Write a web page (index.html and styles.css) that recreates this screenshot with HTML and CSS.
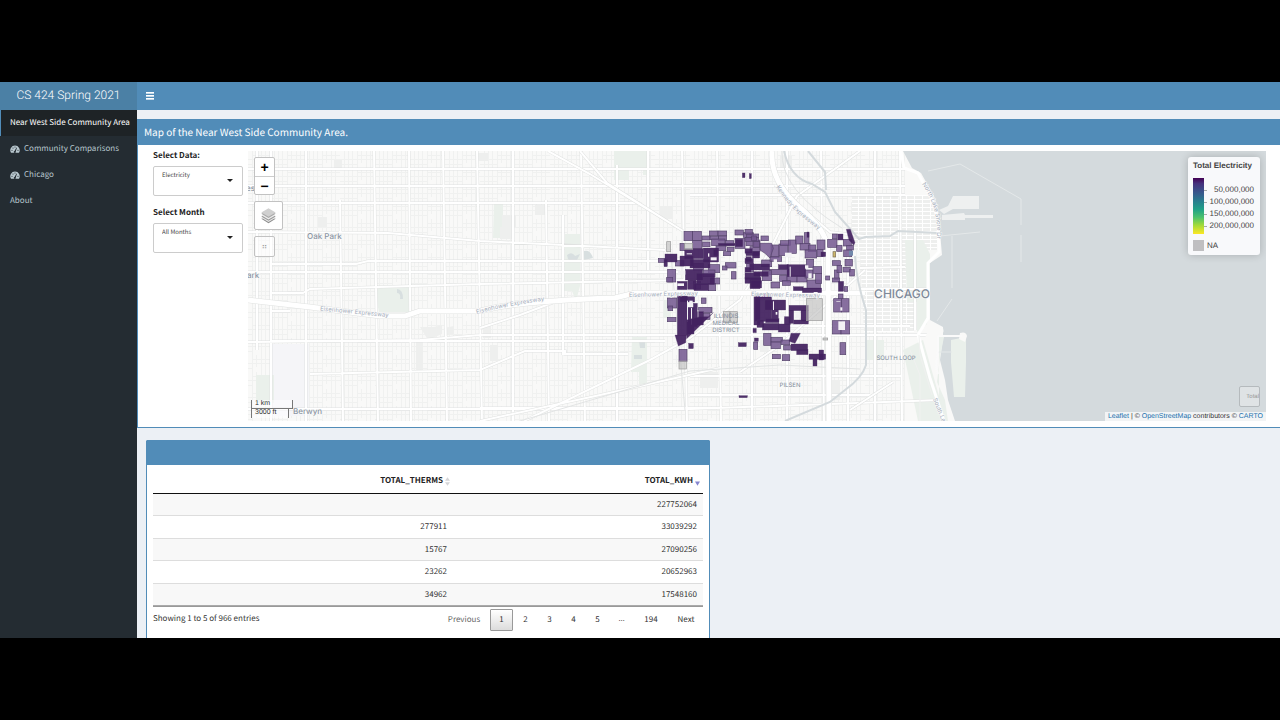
FILE: index.html
```html
<!DOCTYPE html>
<html lang="en">
<head>
<meta charset="utf-8">
<title>CS 424 Spring 2021</title>
<link rel="stylesheet" href="styles.css">
</head>
<body>
<div class="app">
  <aside class="sidebar">
    <div class="brand">CS 424 Spring 2021</div>
    <nav class="menu">
      <a class="menu-item active" href="#west">Near West Side Community Area</a>
      <a class="menu-item" href="#compare"><svg class="dash" viewBox="0 0 20 16"><path d="M10 1a9.500 9.500 0 0 0-8 14.500h16A9.500 9.500 0 0 0 10 1z"/><g class="dash-cut"><circle cx="4" cy="10.500" r="1.200"/><circle cx="6" cy="6" r="1.200"/><circle cx="10" cy="4" r="1.200"/><circle cx="16" cy="10.500" r="1.200"/><path d="M9 12l4-7 1 .5-2.500 7.500a2 2 0 1 1-2.500-1z"/></g></svg>Community Comparisons</a>
      <a class="menu-item" href="#chicago"><svg class="dash" viewBox="0 0 20 16"><path d="M10 1a9.500 9.500 0 0 0-8 14.500h16A9.500 9.500 0 0 0 10 1z"/><g class="dash-cut"><circle cx="4" cy="10.500" r="1.200"/><circle cx="6" cy="6" r="1.200"/><circle cx="10" cy="4" r="1.200"/><circle cx="16" cy="10.500" r="1.200"/><path d="M9 12l4-7 1 .5-2.500 7.500a2 2 0 1 1-2.500-1z"/></g></svg>Chicago</a>
      <a class="menu-item" href="#about">About</a>
    </nav>
  </aside>
  <div class="main">
    <header class="topbar">
      <button class="burger" aria-label="Toggle navigation"><span></span><span></span><span></span></button>
    </header>
    <section class="box map-box">
      <h2 class="box-title">Map of the Near West Side Community Area.</h2>
      <div class="map-body">
        <form class="filters">
          <label for="data">Select Data:</label>
          <div class="pick"><select id="data"><option>Electricity</option><option>Gas</option></select></div>
          <label for="month">Select Month</label>
          <div class="pick"><select id="month"><option>All Months</option><option>January</option></select></div>
        </form>
        <div class="map">
          <svg class="tiles" viewBox="248 151 1018 270" preserveAspectRatio="xMaxYMid slice">
            <defs>
              <pattern id="blocks" width="35" height="17" patternUnits="userSpaceOnUse" x="270" y="151">
                <path class="street" d="M4.500 0v17M8.500 0v17M12.500 0v17M17.500 0v17M21.500 0v12M26.500 0v17M30.500 0v17M0 8.500h35M17 4.500h18M0 13.500h17"/>
              </pattern>
              <pattern id="downtown" width="8" height="8" patternUnits="userSpaceOnUse" x="866" y="195">
                <rect class="block" width="8" height="8"/><path class="loop" d="M0 .5h8M.5 0v8M0 4.500h8"/>
              </pattern>
              <path id="ex1" d="M320 310.500L352 313.500 387 317 400 318"/>
              <path id="ex2" d="M477 314Q500 307 542 301L552 300"/>
              <path id="ex3" d="M629 297L706 295"/>
              <path id="ex4" d="M751 296L832 298"/>
              <path id="ken" d="M776 187Q790 210 818 229L826 234"/>
              <path id="lsd" d="M922 184Q937 205 937 232V246"/>
              <path id="sls" d="M933 399L950 442"/>
            </defs>
            <rect class="land" x="0" y="151" width="1266" height="270"/>
            <rect x="0" y="151" width="905" height="270" fill="url(#blocks)"/>
            <path class="tint" d="M272 344h37v72h-37z"/>
            <path class="park" d="M377 289q12-6 32-2v25h-30q-3-10-2-23zM614 151h33v24h-4v-7h-14v12h-15zM565 234h15v52l-4 15-4-10h-8zM632 337h15v48l-8-1v-12h-8zM494 202h9v36h-10zM256 375h18v28h-18zM664 300h7v18h-8z"/>
            <path class="spot" d="M334 160h8v8h-8zM318 217h9v10h-9zM420 327h14l8-2v9l-14 6zM444 328l10-2v8l-10 2zM483 325h8v13h-8zM502 215h14v12h-14zM478 153h10v8h-10zM535 205h12v10h-12zM660 206h13v13h-13zM500 227h14v12h-14zM416 340h7v30h-7zM490 345h8v16h-8zM780 156h12v12h-12zM700 372h18v16h-18zM760 340h8v12h-8zM830 380h10v20h-10z"/>
            <path class="pond" d="M567 255q5-4 8 1l5-2-3 6-6 2-3-3zM584 251q6-2 9 7l-9 2zM397 289q6 0 6 10h-3q1-6-3-6zM639 341h6v7h-5zM634 355h8v4h-8z"/>
            <path fill="url(#downtown)" d="M852 195h85v55h-85zM860 250h54v82h-50z"/>
            <path class="park" d="M905 240h18l7 14v20l-3 50-10 8v-30h-10zM866 340h18v20h-18zM903 350l20-10 20 70-3 11h-22z"/>
            <g class="casing">
              <path id="roads" d="M248 169H905M248 186H905M248 203H640M248 232L388 233 480 241 665 250M270 264H356L368 261H665M248 272H680M272 293H303L310 289 480 284 690 280M272 341H665M272 311H290M248 342L420 340 480 335H930M310 374L480 370 525 351H565V354H628M248 409H690L940 400M480 408H720M306 151V421M340 200L343 421M374 151L378 421M409 151L411 421M443 151L447 421M477 151L482 421M513 151V421M546 200L549 421M563 215V355M581 151L585 421M617 165V421M648 151V270M682 151L687 421M271 151V421M257 151V350M717 151L721 421M752 151V421M787 151V421M821 151L824 421M848 240V421M875 151V421M900 151L902 421M915 230V330M690 195H905M690 326H910M690 376H902M690 395H870M860 268L905 267M860 289H927"/>
            </g>
            <use href="#roads" class="road"/>
            <g class="casing"><path id="diag" d="M548 151L590 174 683 231M580 151L607 183 683 231M524 421L650 360 690 338 740 300 770 250 797 196 860 151M480 328L520 315 560 300M480 421L600 395 720 368M740 372L780 345 865 270M850 410L893 382M775 185L830 232 865 236"/></g>
            <use href="#diag" class="road"/>
            <path class="rail" d="M520 421L690 371 780 365 860 369M782 151Q780 190 842 228M670 245L685 410"/>
            <g class="casing wide"><path id="express" d="M248 300L310 307 380 316 405 316 420 311H480Q515 301 615 298L635 293H865M772 151Q770 180 797 205 827 230 828 250L829 421"/></g>
            <use href="#express" class="road wide-road"/>
            <path class="river" d="M784 151Q790 178 812 184L825 192 835 212 859 239 865 237 890 236 898 231 938 233M808 151L825 172 826 190M855 256Q856 280 866 310V365Q862 378 845 390L830 402 785 421"/>
            <path class="water" d="M903 151L912 168 921 173 935 198 939 215 940 232 942 255 930 263V320L943 327 943 338 940 360 945 380 948 400 955 421H1266V151z"/>
            <path class="park" d="M951 340l15-3v25l-1 35h-11l-3-35zM939 335l5 2-4 20-3 25 8 18 3 21h-9z"/>
            <path class="land" d="M930 326q8-2 13 2 2 6-4 8l-14 2zM960 333q6-2 7 3l-2 6-6-3z"/>
            <path class="dock" d="M939 210l9-4 5-10h26v13h-26l-9 5zM942 215l22-2 1 2h28v3h-28v2h-23z"/>
            <path class="pier" d="M928 171L960 164 1021 199V225M1021 235V262M940 236L980 232M952 236V288M952 299L937 321M938 352h14"/>
            <path class="quay" d="M938 336h24M938 336v14l-2 16 2 8"/>
            <path class="shore" d="M901 151L904 168 918 173 932 200 938 220 939 252 928 263V318L918 335 930 378 944 421"/>
            <path class="street" d="M919 335L920 355 932 395M910 350l10 25v46"/>
            <g id="parcels"></g>
            <g class="expressway">
              <text><textPath href="#ex1">Eisenhower Expressway</textPath></text>
              <text><textPath href="#ex2">Eisenhower Expressway</textPath></text>
              <text><textPath href="#ex3">Eisenhower Expressway</textPath></text>
              <text><textPath href="#ex4">Eisenhower Expressway</textPath></text>
              <text><textPath href="#ken">Kennedy Expressway</textPath></text>
              <text><textPath href="#lsd">North Lake Shore Dr</textPath></text>
              <text><textPath href="#sls">South La</textPath></text>
            </g>
            <g class="place">
              <text x="307" y="239">Oak Park</text><text x="293" y="414">Berwyn</text>
              <text x="247" y="278">ark</text><text x="246" y="191">es</text>
            </g>
            <g class="district">
              <text x="726" y="318">ILLINOIS</text><text x="726" y="325">MEDICAL</text><text x="726" y="332">DISTRICT</text>
              <text x="790" y="387">PILSEN</text><text x="896" y="360">SOUTH LOOP</text>
            </g>
            <text class="city" x="902" y="298">CHICAGO</text>
          </svg>
          <div class="controls">
            <div class="zoom"><button aria-label="Zoom in">+</button><button aria-label="Zoom out">−</button></div>
            <button class="layers" aria-label="Layers"><svg viewBox="0 0 26 26"><path fill="#8c8c8c" d="M13 14l11 4L13 25 2 18z"/><path fill="#e8e8e8" d="M13 12l11 4.500L13 23 2 16.500z"/><path fill="#999" d="M13 9l11 5.500L13 21 2 14.500z"/><path fill="#eee" d="M13 7l11 5.500L13 19 2 12.500z"/><path fill="#a8a8a8" d="M13 5l11 5.500L13 17 2 10.500z"/><path fill="#d0d0d0" d="M13 2l11 6.500L13 15 2 8.500z"/></svg></button>
            <button class="reset" aria-label="Reset view">⠶</button>
          </div>
          <div class="scale"><span class="km">1 km</span><span class="ft">3000 ft</span></div>
          <div class="legend">
            <strong>Total Electricity</strong>
            <div class="ramp-row">
              <div class="ramp"></div>
              <div class="ticks"><span>50,000,000</span><span>100,000,000</span><span>150,000,000</span><span>200,000,000</span></div>
            </div>
            <div class="na"><i></i>NA</div>
          </div>
          <button class="total">Total</button>
          <div class="credit"><a href="#leaflet">Leaflet</a> | © <a href="#osm">OpenStreetMap</a> contributors © <a href="#carto">CARTO</a></div>
        </div>
      </div>
    </section>
    <div class="row">
      <section class="box table-box">
        <div class="box-title"></div>
        <div class="table-body">
          <table>
            <thead><tr>
              <th>TOTAL_THERMS<svg class="sort" viewBox="0 0 6 10"><path fill="#d5d5d8" d="M3 0l3 4H0zM3 10l3-4H0z"/></svg></th>
              <th>TOTAL_KWH<svg class="sort" viewBox="0 0 6 10"><path fill="#8585cf" d="M0 5h6L3 10z"/></svg></th>
            </tr></thead>
            <tbody>
              <tr><td></td><td>227752064</td></tr>
              <tr><td>277911</td><td>33039292</td></tr>
              <tr><td>15767</td><td>27090256</td></tr>
              <tr><td>23262</td><td>20652963</td></tr>
              <tr><td>34962</td><td>17548160</td></tr>
            </tbody>
          </table>
          <div class="table-foot">
            <span>Showing 1 to 5 of 966 entries</span>
            <div class="pager">
              <button class="prev">Previous</button><button class="current">1</button><button>2</button><button>3</button><button>4</button><button>5</button><span class="more">…</span><button class="last">194</button><button class="next">Next</button>
            </div>
          </div>
        </div>
      </section>
    </div>
  </div>
</div>
<script src="map.js"></script>
</body>
</html>
```
FILE: styles.css
```css
* { box-sizing: border-box; }
body {
  margin: 0;
  padding: 82px 0;
  height: 100vh;
  background: #000;
  color: #333;
  font: 8px/12px "Noto Sans CJK SC", "Open Sans", sans-serif;
  text-rendering: geometricPrecision;
}
button { font: inherit; color: inherit; padding: 0; border: 0; background: none; text-rendering: inherit; }
.app { display: flex; height: 100%; overflow: hidden; background: #ecf0f5; }

.sidebar { flex: 0 0 137px; background: #242c32; }
.brand {
  height: 28px;
  background: #4b80a5;
  color: #fff;
  font: 300 12px/27px Roboto, "Liberation Sans", sans-serif;
  text-align: center;
}
.menu { display: flex; flex-direction: column; }
.menu-item {
  display: flex;
  align-items: center;
  gap: 4px;
  height: 26px;
  padding-left: 10px;
  color: #b8c7ce;
  text-decoration: none;
  white-space: nowrap;
}
.menu-item.active {
  padding-left: 9px;
  border-left: 1px solid #518cb8;
  background: #1e2326;
  color: #fff;
}
.dash { width: 10px; height: 8px; fill: #b8c7ce; }
.dash-cut { fill: #242c32; }

.main { flex: 1; min-width: 0; }
.topbar { display: flex; align-items: center; height: 28px; padding-left: 9px; background: #518cb8; }
.burger { display: flex; flex-direction: column; gap: 1px; width: 8px; }
.burger span { height: 2px; border-bottom: 1px solid #c5d9e8; background: #fff; }

.box { border: 1px solid #518cb8; background: #fff; }
.box-title {
  height: 25px;
  margin: 0;
  padding-left: 6px;
  background: #518cb8;
  color: #fff;
  font-size: 10px;
  font-weight: 400;
  line-height: 24px;
}
.map-box { margin-top: 9px; border-right: 0; }
.map-body { display: flex; padding: 6px 14px 6px 15px; }
.filters { flex: 0 0 95px; display: flex; flex-direction: column; align-items: flex-start; }
.filters label { height: 15px; line-height: 10px; font-weight: 700; color: #222; }
.pick { position: relative; width: 90px; height: 30px; margin-bottom: 12px; }
.pick::after {
  content: "";
  position: absolute;
  right: 10px;
  top: 13px;
  border: 3px solid transparent;
  border-top-color: #222;
  border-bottom: 0;
  pointer-events: none;
}
.pick select {
  appearance: none;
  width: 100%;
  height: 100%;
  padding: 0 8px 12px;
  border: 1px solid #ccc;
  border-radius: 2px;
  background: #fff;
  color: #444;
  font: 6px/12px "Noto Sans CJK SC", "Open Sans", sans-serif;
  text-rendering: inherit;
}

.map { position: relative; flex: 1; min-width: 0; height: 270px; overflow: hidden; font-family: "Liberation Sans", sans-serif; }
.tiles { display: block; width: 100%; height: 100%; }
.land { fill: #f9f9f8; }
.water { fill: #d4dadd; }
.park { fill: #eaf0eb; }
.dock { fill: #eef0f0; }
.tint { fill: #f5f5f8; }
.spot { fill: #eeefee; }
.pond { fill: #d8dfe0; }
.block { fill: #eeefee; }
.loop { fill: none; stroke: #fff; stroke-width: 1; }
.street { fill: none; stroke: #f0f1f0; stroke-width: 1; }
.casing { fill: none; stroke: #e0e2e1; stroke-width: 3; }
.road { fill: none; stroke: #fff; stroke-width: 2; }
.casing.wide { stroke-width: 6; }
.wide-road { stroke-width: 5; }
.rail { fill: none; stroke: #e2e4e4; stroke-width: 1; }
.river { fill: none; stroke: #d4dadd; stroke-width: 2; }
.pier { fill: none; stroke: #e4e8e9; stroke-width: 1; }
.quay { fill: none; stroke: #fafafa; stroke-width: 2; }
.shore { fill: none; stroke: #fff; stroke-width: 3; }
.parcel-dark { fill: #42205f; fill-opacity: .93; stroke: #4e3566; stroke-width: 1; }
.parcel-light { fill: #745990; fill-opacity: .86; stroke: #54426b; stroke-width: 2; }
.parcel-na { fill: #bbb; fill-opacity: .6; stroke: #999; stroke-width: 2; }
.parcel-yellow { fill: #cdb76b; stroke: #776a55; stroke-width: 2; }
.parcel-blue { fill: #7188aa; }
.parcel-gap { fill: #f3f2f5; }
.tiles text { paint-order: stroke; stroke: #fafafa; stroke-width: 1px; font-family: Inter, "Open Sans", sans-serif; }
.expressway text { fill: #a4adba; font-size: 6px; }
.place text { fill: #8b95a2; font-size: 8px; font-weight: 500; }
.district text { fill: #808b9a; font-size: 6px; text-anchor: middle; stroke: none; }
.tiles .city { fill: #7d8998; font-size: 12px; font-weight: 500; text-anchor: middle; }

.controls { position: absolute; left: 6px; top: 6px; display: flex; flex-direction: column; align-items: flex-start; gap: 6px; }
.zoom, .layers, .reset { border: 1px solid #c2c2c2; border-radius: 2px; background: #fff; }
.zoom { display: flex; flex-direction: column; width: 21px; height: 38px; }
.zoom button { flex: 1; color: #000; font: 700 14px/18px "Liberation Sans", sans-serif; }
.zoom button + button { border-top: 1px solid #ccc; line-height: 16px; }
.layers { display: flex; align-items: center; justify-content: center; width: 29px; height: 29px; }
.layers svg { width: 17px; height: 17px; }
.reset { width: 21px; height: 21px; background: rgba(255, 255, 255, .5); color: #999; }

.scale { position: absolute; left: 3px; bottom: 3px; display: flex; flex-direction: column; align-items: flex-start; font-size: 7px; line-height: 8px; }
.scale span { padding-left: 3px; border: 1px solid #777; background: rgba(255, 255, 255, .5); }
.scale .km { width: 42px; height: 9px; border-top: 0; }
.scale .ft { width: 38px; height: 9px; border-top: 0; border-bottom: 0; }

.legend {
  position: absolute;
  top: 6px;
  right: 6px;
  width: 72px;
  padding: 4px 6px 4px 5px;
  border-radius: 3px;
  background: #f8f9fb;
  box-shadow: 0 0 8px rgba(0, 0, 0, .2);
  color: #444;
  font-size: 8px;
  line-height: 10px;
}
.legend strong { display: block; white-space: nowrap; }
.ramp-row { display: flex; justify-content: space-between; margin-top: 7px; }
.ramp { width: 11px; height: 56px; background: linear-gradient(#440154, #46327e 10%, #365c8d 28%, #277f8e 42%, #1fa187 56%, #4ac16d 70%, #a0da39 84%, #fde725); }
.ticks { display: flex; flex-direction: column; justify-content: flex-start; gap: 2px; padding-top: 7px; text-align: right; }
.ticks span { position: relative; }
.ticks span::before { content: ""; position: absolute; right: 47px; top: 5px; width: 3px; border-top: 1px solid #aaa; }
.na { display: flex; align-items: center; gap: 3px; margin-top: 6px; }
.na i { width: 11px; height: 11px; background: #bfbfc1; }
.total {
  position: absolute;
  right: 6px;
  bottom: 14px;
  width: 21px;
  height: 21px;
  border: 1px solid #b5babd;
  border-radius: 2px;
  background: #dfe3e5;
  color: #999;
  font-size: 6px;
  text-align: right;
}
.credit { position: absolute; right: 0; bottom: 0; padding: 0 3px; background: rgba(255, 255, 255, .7); font-size: 7px; line-height: 9px; white-space: nowrap; }
.credit a { color: #2272ae; text-decoration: none; }

.row { padding: 12px 6px 0 9px; }
.table-box { width: 50%; border-radius: 1px; }
.table-box .box-title { height: 24px; }
.table-body { padding: 4px 6px 7px; }
table { width: 100%; border-collapse: separate; border-spacing: 0; table-layout: fixed; border-bottom: 1px solid #999; font-size: 8px; }
th, td { padding: 0 6px; text-align: right; }
th:first-child { width: 300px; }
th { height: 25px; border-bottom: 1px solid #111; font-weight: 700; color: #222; padding-right: 3px; }
td { height: 22px; border-bottom: 1px solid #ddd; }
tbody tr:nth-child(even) td { height: 23px; }
tbody tr:last-child td { border-bottom-color: #aaa; }
tbody tr:nth-child(odd) { background: #f8f8f8; }
.sort { width: 5px; height: 9px; margin-left: 2px; vertical-align: -3px; }
.table-foot { display: flex; justify-content: space-between; padding-top: 2px; }
.table-foot > span { padding-top: 4px; }
.pager { display: flex; gap: 1px; }
.pager > * { width: 23px; height: 22px; line-height: 20px; text-align: center; }
.pager .current { border: 1px solid #999; border-radius: 1px; background: linear-gradient(#fff, #dcdcdc); }
.pager .prev { width: 50px; color: #666; }
.pager .last { width: 34px; }
.pager .next { width: 34px; }
.pager .more { font-family: "Open Sans", sans-serif; }
```
FILE: map.js
```js
const ns = "http://www.w3.org/2000/svg";
const root = document.getElementById("parcels");

// Each sector has its own origin; coordinates are thirds of a map unit: x,y,w,h.
const sectors = [
  { x: 640, y: 220,
    light: "132,34,26,28 158,34,26,28 208,33,26,14 234,33,26,14 186,48,24,12 210,49,26,10 236,48,24,14 256,62,25,16 285,30,25,15 310,38,30,14 120,70,14,22 158,62,28,24 188,66,22,14 215,57,40,20 228,78,30,14 250,95,22,12 262,82,20,12 285,55,30,30 318,52,25,25 340,60,20,20 83,148,24,38 80,172,18,14 55,115,20,12 106,122,26,16 256,128,32,16 247,138,14,12 274,155,14,22 82,234,28,30 82,292,26,13 84,258,14,14 205,134,34,24 160,130,30,20 190,150,35,20 212,174,27,18 205,190,22,22 160,185,22,22 176,262,40,16 184,234,14,16 190,280,20,18 117,388,24,36 320,130,20,25 320,42,36,12 330,80,30,14",
    dark: "134,86,56,30 190,84,46,42 120,108,40,30 75,102,36,24 72,118,10,22 150,118,60,26 136,148,52,32 170,160,54,34 144,180,24,28 112,184,30,25 162,190,44,22 112,228,30,118 142,262,20,80 160,250,12,70 170,275,20,40 120,230,44,16 146,370,14,16 295,368,24,12 286,58,22,22 318,95,40,12 318,110,16,14 315,158,45,20 330,178,30,28 342,225,18,90 235,70,50,7 220,88,14,20",
    polys: "220,278 140,356 140,300 180,290 205,290|105,345 139,345 137,368 115,378",
    gap: "204,100,4,10 141,242,3,64 153,264,3,50 173,270,2,24 114,152,22,12 112,190,20,8 148,242,10,18 212,112,18,9 140,100,16,3",
    na: "80,65,12,30 133,70,25,18 250,275,20,32 270,275,22,32 117,423,22,24" },
  { x: 745, y: 220,
    light: "78,75,24,38 102,72,26,35 106,62,30,14 130,60,24,40 152,48,22,24 178,38,14,32 165,70,30,20 190,75,22,20 180,90,35,24 216,60,24,28 248,58,28,24 262,42,14,14 295,58,24,20 305,76,20,14 0,52,40,12 24,64,20,18 48,48,22,14 50,120,30,20 75,110,35,14 74,148,60,16 52,152,28,30 104,166,22,18 126,168,30,18 156,168,30,18 78,186,26,18 112,182,24,14 184,118,22,24 180,150,24,24 186,180,40,26 204,140,26,20 212,160,18,30 216,88,18,22 262,122,24,14 268,150,14,28 262,174,22,12 276,136,14,22 275,76,16,18 296,90,24,20 300,118,22,20 294,142,22,14 314,148,14,20 266,236,23,40 289,236,23,40 262,302,26,40 288,302,26,40 285,368,17,36 56,340,22,36 78,352,34,14 78,366,28,20 108,360,26,14 116,376,20,14 82,403,24,13 112,404,22,18 280,222,14,14 26,366,12,22 0,28,22,14 20,48,14,14 242,168,12,12 298,200,10,14",
    dark: "30,232,50,72 30,222,48,12 60,240,62,30 80,268,20,36 62,296,40,12 36,300,20,22 52,310,50,20 132,256,58,16 132,270,14,40 146,300,44,12 168,270,22,34 100,312,35,24 138,372,50,20 155,388,34,16 192,402,50,16 204,416,12,22 222,390,14,30 0,115,25,16 14,132,60,18 26,155,44,14 0,172,48,18 18,182,32,22 126,134,56,36 100,134,30,14 172,204,58,14 145,200,30,12 278,42,16,18 280,184,16,30 22,94,22,20 118,290,18,24 228,96,14,14 0,142,18,14 28,354,12,10 0,86,22,14 186,36,6,16",
    polys: "304,28 316,28 330,68 326,76 312,60|138,340 166,340 150,370 132,364|24,325 34,325 34,338 24,338",
    lightPolys: "45,70 80,70 85,85 75,114 60,100 45,90",
    gap: "152,280,14,14 286,262,6,10 274,244,12,2 280,304,20,26 84,244,3,26 104,280,14,12 92,276,5,8 120,98,20,14 162,98,16,12 134,140,3,30 180,136,10,10 190,160,10,14 86,118,10,8 206,216,12,4",
    na: "184,236,48,66 234,354,14,6",
    yellow: "264,95,8,16",
    blue: "312,92,12,15" },
  { x: 690, y: 145, light: "", dark: "157,84,8,14 178,86,6,15 147,752,25,6" }
];

function add(parent, tag, attrs) {
  const node = document.createElementNS(ns, tag);
  for (const key in attrs) node.setAttribute(key, attrs[key]);
  parent.appendChild(node);
  return node;
}

for (const sector of sectors) {
  const group = add(root, "g", { transform: `translate(${sector.x} ${sector.y}) scale(${1 / 3})` });
  for (const kind of ["light", "dark", "gap", "na", "yellow", "blue"]) {
    for (const item of (sector[kind] || "").split(" ").filter(Boolean)) {
      const [x, y, width, height] = item.split(",");
      add(group, "rect", { x, y, width, height, class: "parcel-" + kind });
    }
  }
  for (const points of (sector.polys || "").split("|").filter(Boolean)) {
    add(group, "polygon", { points, class: "parcel-dark" });
  }
  if (sector.lightPolys) add(group, "polygon", { points: sector.lightPolys, class: "parcel-light" });
}
```
